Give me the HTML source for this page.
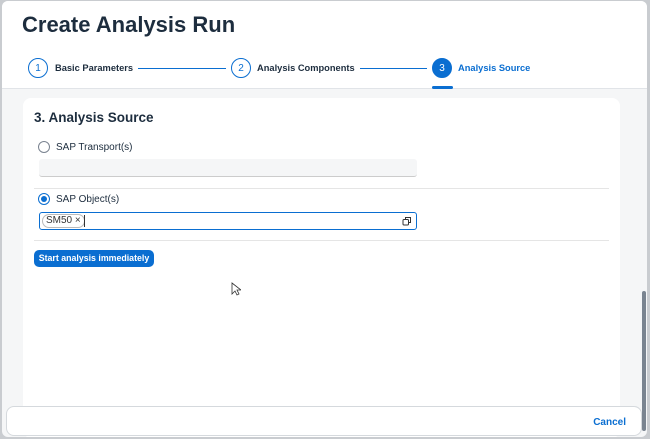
<!DOCTYPE html><html><head><style>
*{box-sizing:border-box;margin:0;padding:0}
body{width:650px;height:439px;background:#c9ccd0;font-family:"Liberation Sans",sans-serif;position:relative;overflow:hidden}
.dlg{position:absolute;left:2px;top:1px;width:645px;height:436px;background:#f5f6f7;border-radius:6px;overflow:hidden}
.hdr{position:absolute;left:0;top:0;width:645px;height:88px;background:#fff;border-bottom:1px solid #e1e4e8}
h1{position:absolute;left:20px;top:11px;font-size:22px;font-weight:bold;color:#1d2d3e}
.c{position:absolute;width:20px;height:20px;border-radius:50%;border:1px solid #0a6ed1;color:#0a6ed1;font-size:10px;display:flex;align-items:center;justify-content:center;top:57px}
.t{position:absolute;top:62px;font-size:9.3px;font-weight:bold;color:#1d2d3e}
.ln{position:absolute;top:67px;height:1px;background:#0a6ed1}
.card{position:absolute;left:21px;top:97px;width:597px;height:340px;background:#fff;border-radius:8px}
.rad{position:absolute;width:12px;height:12px;border-radius:50%;border:1px solid #7a8390;background:#fff}
.lbl{position:absolute;font-size:10px;color:#1d2d3e}
.sep{position:absolute;left:11px;width:575px;height:1px;background:#e5e5e5}
</style></head><body>
<div class="dlg">
<div class="hdr">
<h1>Create Analysis Run</h1>
<div class="c" style="left:26px">1</div><div class="t" style="left:53px">Basic Parameters</div>
<div class="ln" style="left:136px;width:88px"></div>
<div class="c" style="left:229px">2</div><div class="t" style="left:255px">Analysis Components</div>
<div class="ln" style="left:358px;width:67px"></div>
<div class="c" style="left:430px;background:#0a6ed1;color:#fff">3</div><div class="t" style="left:456px;color:#0a6ed1">Analysis Source</div>
<div style="position:absolute;left:430px;top:85px;width:21px;height:3px;background:#0a6ed1;border-radius:2px"></div>
</div>
<div class="card">
<div style="position:absolute;left:11px;top:12px;font-size:13.5px;font-weight:bold;color:#1d2d3e">3. Analysis Source</div>
<div class="rad" style="left:15px;top:43px"></div><div class="lbl" style="left:33px;top:44px">SAP Transport(s)</div>
<div style="position:absolute;left:16px;top:61px;width:378px;height:18px;background:#f5f6f7;border-bottom:1px solid #ccc;border-radius:3px"></div>
<div class="sep" style="top:90px"></div>
<div class="rad" style="left:15px;top:95px;border-color:#0a6ed1"><div style="position:absolute;left:2px;top:2px;width:6px;height:6px;border-radius:50%;background:#0a6ed1"></div></div>
<div class="lbl" style="left:33px;top:96px">SAP Object(s)</div>
<div style="position:absolute;left:16px;top:114px;width:378px;height:18px;border:1px solid #0a6ed1;border-radius:3px;background:#fff">
<div style="position:absolute;left:2px;top:1px;height:14px;padding:0 3px;border:1px solid #bbb;border-radius:7px;font-size:10px;line-height:12px;color:#333">SM50 ×</div>
<div style="position:absolute;left:44px;top:2px;width:1px;height:12px;background:#333"></div>
<svg style="position:absolute;right:4px;top:3px" width="10" height="10" viewBox="0 0 10 10" fill="none" stroke="#333" stroke-width="1"><rect x="1" y="3.5" width="5.5" height="5.5" rx="1"/><path d="M3.5 3V1.5h5v5H7"/></svg>
</div>
<div class="sep" style="top:142px"></div>
<div style="position:absolute;left:11px;top:152px;width:120px;height:17px;background:#0a6ed1;border-radius:5px;color:#fff;font-size:8.8px;font-weight:bold;text-align:center;line-height:17px">Start analysis immediately</div>
</div>
<div style="position:absolute;right:1px;top:290px;width:4px;height:140px;background:#7a8490;border-radius:2px"></div>
<div style="position:absolute;left:4px;top:405px;width:636px;height:30px;background:#fff;border:1px solid #d5d9dd;border-radius:8px">
<div style="position:absolute;right:15px;top:10px;font-size:10px;font-weight:bold;color:#0a6ed1">Cancel</div></div>
</div>
<svg style="position:absolute;left:231px;top:282px" width="10" height="14" viewBox="0 0 10 14"><path d="M1 1v11l3-3 2 4 2-1-2-4h4z" fill="#fff" stroke="#333" stroke-width="0.8"/></svg>
</body></html>
